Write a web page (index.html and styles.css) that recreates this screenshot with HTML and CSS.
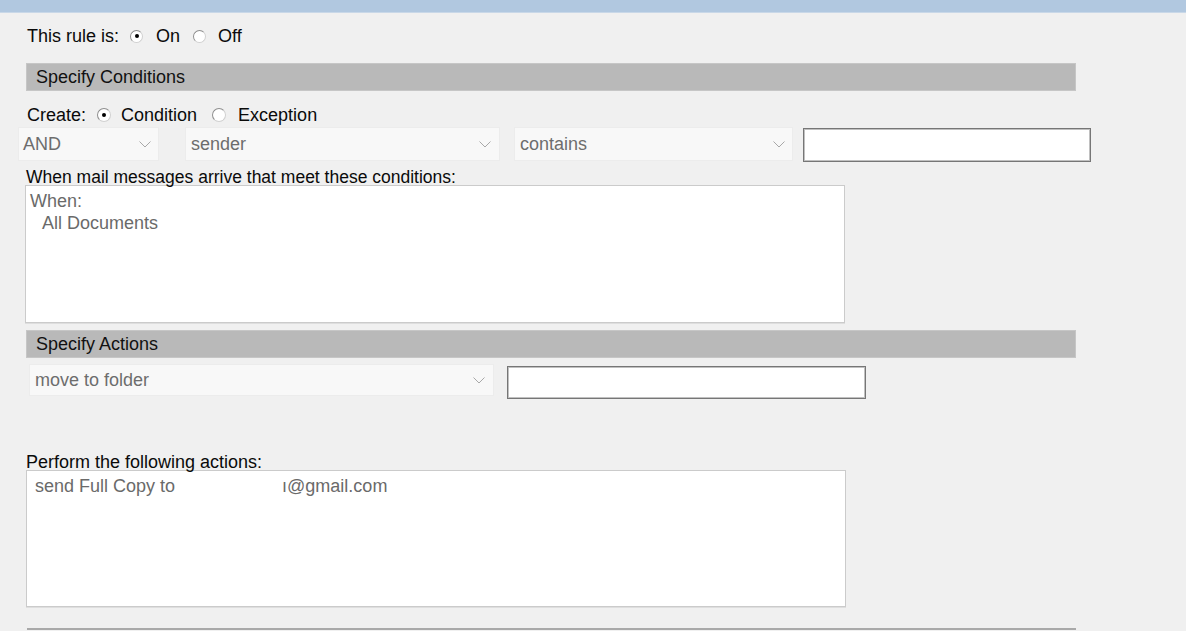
FILE: index.html
```html
<!DOCTYPE html>
<html>
<head>
<meta charset="utf-8">
<link rel="stylesheet" href="styles.css">
</head>
<body>
<div class="titlebar"></div>
<div class="content">
  <div class="row rule-row">
    <span class="label">This rule is:</span>
    <span class="radio checked r1"></span><span class="label">On</span>
    <span class="radio r2"></span><span class="label">Off</span>
  </div>
  <div class="section-head head1">Specify Conditions</div>
  <div class="row create-row">
    <span class="label">Create:</span>
    <span class="radio checked c1"></span><span class="label">Condition</span>
    <span class="radio c2"></span><span class="label">Exception</span>
  </div>
  <div class="cond-row">
    <div class="dropdown dd-and"><span>AND</span><svg class="chev" width="12" height="7" viewBox="0 0 12 7"><path d="M0.5 0.5 L6 6 L11.5 0.5" fill="none" stroke="#a8a8a8" stroke-width="1"/></svg></div>
    <div class="dropdown dd-sender"><span>sender</span><svg class="chev" width="12" height="7" viewBox="0 0 12 7"><path d="M0.5 0.5 L6 6 L11.5 0.5" fill="none" stroke="#a8a8a8" stroke-width="1"/></svg></div>
    <div class="dropdown dd-contains"><span>contains</span><svg class="chev" width="12" height="7" viewBox="0 0 12 7"><path d="M0.5 0.5 L6 6 L11.5 0.5" fill="none" stroke="#a8a8a8" stroke-width="1"/></svg></div>
    <div class="textbox tb-cond"></div>
  </div>
  <div class="label block-label lbl-when">When mail messages arrive that meet these conditions:</div>
  <div class="listbox list-when">
    <div class="item">When:</div>
    <div class="item indent">All Documents</div>
  </div>
  <div class="section-head head2">Specify Actions</div>
  <div class="action-row">
    <div class="dropdown dd-move"><span>move to folder</span><svg class="chev" width="12" height="7" viewBox="0 0 12 7"><path d="M0.5 0.5 L6 6 L11.5 0.5" fill="none" stroke="#a8a8a8" stroke-width="1"/></svg></div>
    <div class="textbox tb-action"></div>
  </div>
  <div class="label block-label lbl-perform">Perform the following actions:</div>
  <div class="listbox list-actions">
    <div class="item">send Full Copy to<span class="redacted"></span>ı@gmail.com</div>
  </div>
  <div class="bottom-line"></div>
</div>
</body>
</html>
```

FILE: styles.css
```css
html, body {
  margin: 0;
  padding: 0;
  background: #f0f0f0;
  font-family: "Liberation Sans", Arial, sans-serif;
  font-size: 18px;
  color: #111;
  overflow: hidden;
}

.titlebar {
  height: 13px;
  background: #b1c8e0;
  border-bottom: 1px solid #c9d8e8;
  box-sizing: border-box;
}

.content {
  padding-left: 26px;
  width: 1050px;
}

.row {
  display: flex;
  align-items: center;
  height: 18px;
  line-height: 18px;
}

.label {
  color: #0a0a0a;
  white-space: nowrap;
}

.rule-row {
  margin-top: 14px;
  padding-left: 1px;
}

.radio {
  display: inline-block;
  box-sizing: border-box;
  width: 13px;
  height: 13px;
  border: 1px solid #8e8e8e;
  border-bottom-color: #d0d0d0;
  border-right-color: #d0d0d0;
  border-radius: 50%;
  background: #fff;
  position: relative;
  flex: none;
}

.radio.checked::after {
  content: "";
  position: absolute;
  left: 3.5px;
  top: 3.5px;
  width: 4px;
  height: 4px;
  border-radius: 50%;
  background: #000;
}

.r1 { margin-left: 11px; margin-right: 13px; }
.r2 { margin-left: 13px; margin-right: 12px; }

.section-head {
  height: 28px;
  box-sizing: border-box;
  background: #b9b9b9;
  border: 1px solid #c6c6c6;
  padding-left: 9px;
  line-height: 26px;
  color: #111;
}

.head1 { margin-top: 18px; }

.create-row {
  margin-top: 15px;
  padding-left: 1px;
}

.c1 { margin-left: 11px; margin-right: 10px; width: 14px; height: 14px; }
.c2 { margin-left: 15px; margin-right: 12px; width: 14px; height: 14px; }
.c1.checked::after { left: 4px; top: 4px; }

.cond-row {
  display: flex;
  align-items: flex-start;
  margin-top: 3px;
  margin-left: -8px;
  height: 35px;
}

.dropdown {
  flex: none;
  box-sizing: border-box;
  height: 34px;
  background: #f8f8f8;
  border: 1px solid #ececec;
  display: flex;
  align-items: center;
  justify-content: space-between;
  padding-left: 4px;
  padding-right: 7px;
  color: #6d6d6d;
  white-space: nowrap;
}

.chev { flex: none; }

.dd-and { width: 141px; }
.dd-sender { width: 315px; margin-left: 26px; padding-left: 5px; padding-right: 8px; }
.dd-contains { width: 279px; margin-left: 14px; padding-left: 5px; padding-right: 7px; }

.textbox {
  flex: none;
  box-sizing: border-box;
  background: #fff;
  border: 1px solid #767676;
  box-shadow: inset 0 0 0 1px #c0c0c0;
}

.tb-cond {
  width: 288px;
  height: 34px;
  margin-left: 10px;
  margin-top: 1px;
}

.block-label {
  height: 16px;
  line-height: 16px;
}

.lbl-when {
  margin-top: 7px;
  font-size: 17.5px;
}

.listbox {
  box-sizing: border-box;
  background: #fff;
  border: 1px solid #cbcbcb;
  box-shadow: 0 1px 0 #dedede;
  padding-top: 4px;
  padding-left: 4px;
  color: #6a6a6a;
}

.item {
  height: 22px;
  line-height: 22px;
  white-space: nowrap;
}

.indent { padding-left: 12px; }

.list-when {
  width: 820px;
  height: 138px;
  margin-left: -1px;
  margin-top: 0;
}

.head2 { margin-top: 7px; }

.action-row {
  display: flex;
  align-items: flex-start;
  margin-top: 6px;
  margin-left: 3px;
  height: 35px;
}

.dd-move {
  width: 465px;
  height: 32px;
  padding-left: 5px;
  padding-right: 8px;
}

.tb-action {
  width: 359px;
  height: 33px;
  margin-left: 13px;
  margin-top: 2px;
}

.lbl-perform {
  margin-top: 55px;
}

.list-actions {
  width: 820px;
  height: 137px;
  margin-top: 0;
  padding-left: 8px;
}

.redacted {
  display: inline-block;
  width: 107px;
}

.bottom-line {
  margin-top: 21px;
  margin-left: 1px;
  width: 1049px;
  height: 2px;
  background: #a9a9a9;
}
```
